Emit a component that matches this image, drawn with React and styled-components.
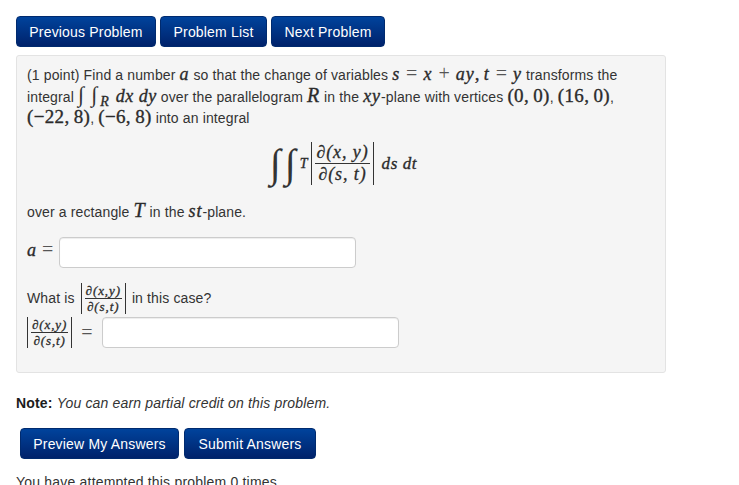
import React from 'react';
import styled, { createGlobalStyle } from 'styled-components';

const Global = createGlobalStyle`
html, body {
  margin: 0;
  background: #fff;
  overflow: hidden;
}
body {
  font-family: 'Liberation Sans', Arial, sans-serif;
  font-size: 14px;
  color: #333;
}
`;

const Page = styled.div`
  width: 739px;
  height: 485px;
  overflow: hidden;
  padding: 16px 0 0 16px;
  box-sizing: border-box;
`;

const NavBar = styled.div`
  display: flex;
  gap: 4px;
  margin-left: ${(p) => p.$indent || 0}px;
`;

const Button = styled.button`
  height: 31px;
  width: ${(p) => p.$w}px;
  padding: 0;
  border: 1px solid #002a6e;
  border-radius: 4px;
  background: linear-gradient(to bottom, #00439c, #00226b);
  color: #fff;
  font-family: 'Liberation Sans', Arial, sans-serif;
  font-size: 14px;
  letter-spacing: 0.18px;
  text-align: center;
`;

const Panel = styled.div`
  width: 650px;
  height: 318px;
  box-sizing: border-box;
  margin-top: 8px;
  padding: 9px 10px 0 10px;
  background: #f5f5f5;
  border: 1px solid #e3e3e3;
  border-radius: 3px;
  line-height: 21.5px;
  color: #333;
`;

const Para = styled.div`
  white-space: nowrap;
  letter-spacing: 0.13px;
  height: 21.5px;
`;

const M = styled.span`
  font-family: 'Liberation Serif', 'Times New Roman', serif;
  font-size: ${(p) => p.$size || 18}px;
  font-style: italic;
  font-weight: 400;
  -webkit-text-stroke: 0.35px currentColor;
  color: #2b2b2b;
  letter-spacing: ${(p) => p.$track ?? 0.9}px;
  line-height: 0;
`;

// upright numbers and coordinates in the math
const Num = styled(M)`
  font-size: 19px;
  font-style: normal;
  letter-spacing: 0.35px;
`;

const IntSign = styled.span`
  font-family: 'Liberation Serif', 'Times New Roman', serif;
  font-size: 22px;
  line-height: 0;
  color: #333;
  margin: 0 3px 0 4px;
`;

const Op = styled.span`
  font-family: 'Liberation Serif', 'Times New Roman', serif;
  font-size: 20px;
  line-height: 0;
  color: #555;
  margin: 0 ${(p) => p.$gap ?? 6}px;
`;

const Sub = styled(M)`
  font-size: 14px;
  vertical-align: -4px;
  margin-right: ${(p) => p.$after || 0}px;
`;

const Display = styled.div`
  display: flex;
  justify-content: center;
  align-items: center;
  height: 46px;
  margin-top: 11px;
  padding-left: 5px;
`;

const BigInt = styled.span`
  font-family: 'Liberation Serif', serif;
  font-size: 40px;
  line-height: 46px;
  color: #333;
  margin-right: 4px;
`;

const Abs = styled.span`
  display: inline-flex;
  padding: 0 ${(p) => p.$pad}px;
  border-left: 1px solid #333;
  border-right: 1px solid #333;
  vertical-align: middle;
`;

const Frac = styled.span`
  display: inline-flex;
  flex-direction: column;
  align-items: center;
  font-family: 'Liberation Serif', 'Times New Roman', serif;
  font-size: ${(p) => p.$size}px;
  font-weight: 400;
  font-style: italic;
  -webkit-text-stroke: 0.3px currentColor;
  line-height: ${(p) => p.$line}px;
  color: #2b2b2b;
  letter-spacing: 0.9px;
  white-space: nowrap;
`;

const Over = styled.span`
  border-bottom: 1px solid #333;
  padding: 0 1px;
  align-self: stretch;
  text-align: center;
`;

const Measure = styled(M)`
  margin-left: 8px;
  font-size: 17px;
  letter-spacing: 0.6px;
  line-height: normal;
`;

const AfterDisplay = styled.div`
  margin-top: 15px;
  height: 24px;
  letter-spacing: 0.13px;
`;

const AnswerRow = styled.div`
  display: flex;
  align-items: center;
  gap: ${(p) => p.$gap}px;
  height: 31px;
  margin-top: ${(p) => p.$top}px;
`;

const Input = styled.input`
  width: 297px;
  height: 31px;
  box-sizing: border-box;
  background: #fff;
  border: 1px solid #ccc;
  border-radius: 4px;
  box-shadow: inset 0 1px 1px rgba(0, 0, 0, 0.075);
`;

const QuestionRow = styled.div`
  display: flex;
  align-items: center;
  gap: 6px;
  margin-top: 13px;
  height: 36px;
  letter-spacing: 0.13px;
`;

const Note = styled.div`
  margin-top: 22px;
  line-height: 17px;
  letter-spacing: 0.17px;
  color: #333;
`;

const NoteLabel = styled.b`
  color: #1c1c1c;
`;

const FormBar = styled(NavBar)`
  margin-top: 16px;
  gap: 5px;
`;

const Attempts = styled.div`
  margin-top: 15px;
  line-height: 17px;
  letter-spacing: 0.2px;
`;

const Jacobian = () => (
  <Abs $pad={3}>
    <Frac $size={13} $line={15}>
      <Over>∂(x,y)</Over>
      <span>∂(s,t)</span>
    </Frac>
  </Abs>
);

export default function App() {
  return (
    <Page>
      <Global />
      <NavBar>
        <Button $w={140}>Previous Problem</Button>
        <Button $w={107}>Problem List</Button>
        <Button $w={114}>Next Problem</Button>
      </NavBar>
      <Panel>
        <Para>
          (1 point) Find a number <M>a</M> so that the change of variables <M>s</M>
          <Op>=</Op><M>x</M><Op>+</Op><M>ay</M><Num>,</Num> <M>t</M><Op>=</Op><M>y</M> transforms the
        </Para>
        <Para>
          integral<IntSign>∫</IntSign><IntSign>∫</IntSign><Sub $after={6}>R</Sub><M $track={0.5}>dx dy</M> over the parallelogram <M $size={20}>R</M> in
          the <M>xy</M>-plane with vertices <Num>(0,&#8201;0)</Num>, <Num>(16,&#8201;0)</Num>,
        </Para>
        <Para>
          <Num>(−22,&#8201;8)</Num>, <Num>(−6,&#8201;8)</Num> into an integral
        </Para>
        <Display>
          <BigInt>∫</BigInt>
          <BigInt>∫</BigInt>
          <Sub $after={3}>T</Sub>
          <Abs $pad={3}>
            <Frac $size={18} $line={21}>
              <Over>∂(x, y)</Over>
              <span>∂(s, t)</span>
            </Frac>
          </Abs>
          <Measure>ds dt</Measure>
        </Display>
        <AfterDisplay>
          over a rectangle <M $size={20}>T</M> in the <M>st</M>-plane.
        </AfterDisplay>
        <AnswerRow $top={11} $gap={1}>
          <span>
            <M>a</M><Op $gap={5}>=</Op>
          </span>
          <Input />
        </AnswerRow>
        <QuestionRow>
          What is
          <Jacobian />
          in this case?
        </QuestionRow>
        <AnswerRow $top={0} $gap={5}>
          <Jacobian />
          <Op $gap={4}>=</Op>
          <Input />
        </AnswerRow>
      </Panel>
      <Note>
        <NoteLabel>Note:</NoteLabel> <i>You can earn partial credit on this problem.</i>
      </Note>
      <FormBar $indent={4}>
        <Button $w={159}>Preview My Answers</Button>
        <Button $w={132}>Submit Answers</Button>
      </FormBar>
      <Attempts>You have attempted this problem 0 times.</Attempts>
    </Page>
  );
}
